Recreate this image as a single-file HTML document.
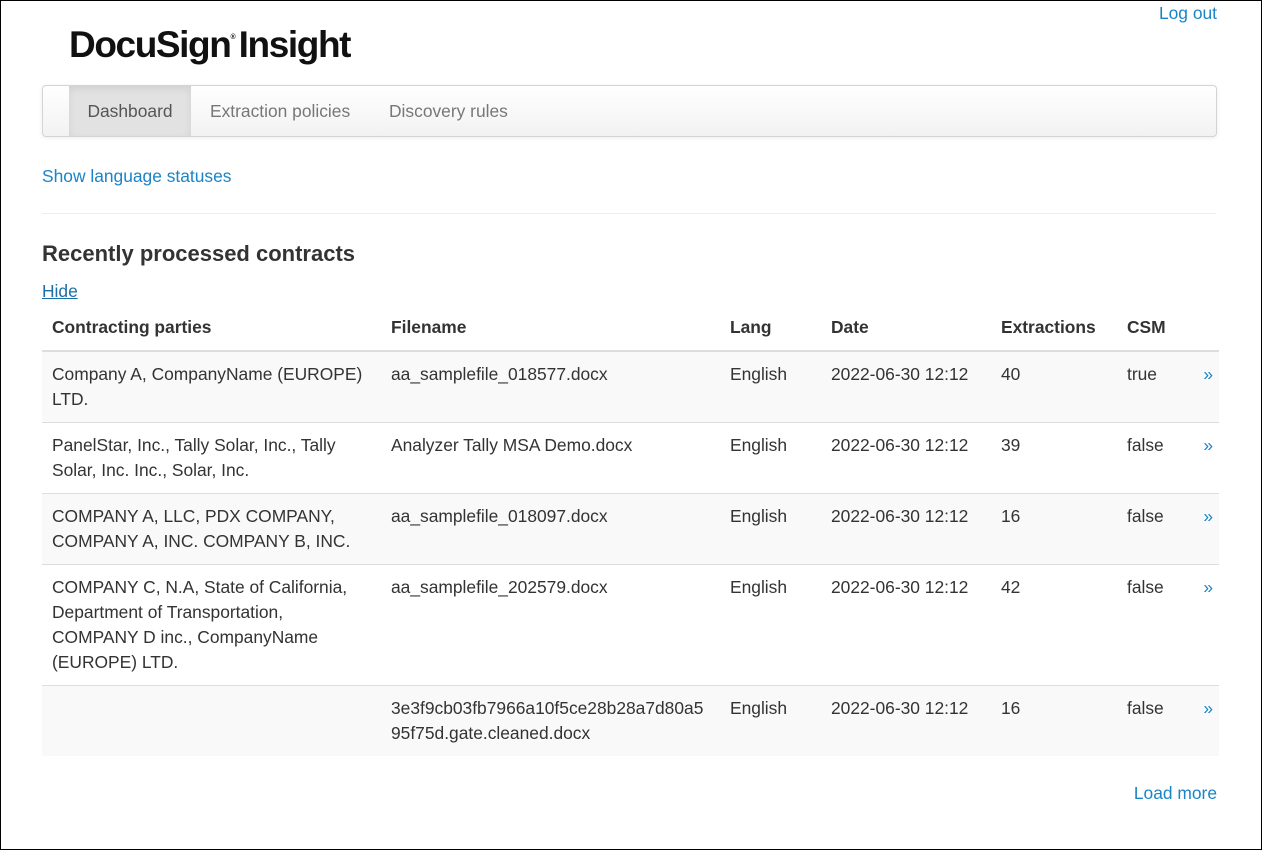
<!DOCTYPE html>
<html><head><style>
html,body{margin:0;padding:0}
body{width:1260px;height:848px;border:1px solid #000;font-family:"Liberation Sans",sans-serif;font-size:17.4px;color:#333;position:relative;overflow:hidden;background:#fff}
a{color:#1b84c6;text-decoration:none}
.logo{position:absolute;left:68px;top:23px;font-size:37px;font-weight:bold;color:#111;letter-spacing:-1.4px}
.logo sup{font-size:7px;letter-spacing:0;vertical-align:top;position:relative;top:10px;margin-right:3px}
.logout{position:absolute;right:44px;top:2px}
.nav{position:absolute;left:41px;top:84px;width:1173px;height:50px;border:1px solid #d4d4d4;border-radius:4px;background:linear-gradient(#fff,#f2f2f2);box-shadow:0 1px 4px rgba(0,0,0,.08)}
.nav span{position:absolute;top:0;height:50px;line-height:50px;color:#777}
.nav .act{background:#e2e2e2;color:#555;box-shadow:inset 0 3px 8px rgba(0,0,0,.08)}
.lang{position:absolute;left:41px;top:165px}
hr{position:absolute;left:41px;top:212px;width:1174px;margin:0;border:0;border-top:1px solid #eee}
h2{position:absolute;left:41px;top:240px;margin:0;font-size:22px;font-weight:bold;color:#333}
.hide{position:absolute;left:41px;top:280px;color:#1b6fa8;text-decoration:underline}
table{position:absolute;left:41px;top:306px;width:1177px;border-collapse:collapse}
td,th{text-align:left;vertical-align:top;padding:10px 10px;line-height:25px}
th{font-weight:bold;padding:8px 10px 10px;border-bottom:2px solid #ddd}
tr.s td{background:#f9f9f9}
tbody tr td{border-top:1px solid #ddd}
tbody tr:first-child td{border-top:0}
td.r{padding-right:6px;text-align:right}
.more{position:absolute;right:44px;top:782px}
</style></head><body>
<div class="logo">DocuSign<sup>®</sup>Insight</div>
<a class="logout">Log out</a>
<div class="nav">
<span class="act" style="left:26px;width:122px;text-align:center">Dashboard</span>
<span style="left:167px">Extraction policies</span>
<span style="left:346px">Discovery rules</span>
</div>
<a class="lang">Show language statuses</a>
<hr>
<h2>Recently processed contracts</h2>
<a class="hide">Hide</a>
<table>
<colgroup><col style="width:339px"><col style="width:339px"><col style="width:101px"><col style="width:170px"><col style="width:126px"><col style="width:70px"><col></colgroup>
<thead><tr><th>Contracting parties</th><th>Filename</th><th>Lang</th><th>Date</th><th>Extractions</th><th>CSM</th><th></th></tr></thead>
<tbody>
<tr class="s"><td>Company A, CompanyName (EUROPE) LTD.</td><td>aa_samplefile_018577.docx</td><td>English</td><td>2022-06-30 12:12</td><td>40</td><td>true</td><td class="r"><a>»</a></td></tr>
<tr><td>PanelStar, Inc., Tally Solar, Inc., Tally Solar, Inc. Inc., Solar, Inc.</td><td>Analyzer Tally MSA Demo.docx</td><td>English</td><td>2022-06-30 12:12</td><td>39</td><td>false</td><td class="r"><a>»</a></td></tr>
<tr class="s"><td>COMPANY A, LLC, PDX COMPANY, COMPANY A, INC. COMPANY B, INC.</td><td>aa_samplefile_018097.docx</td><td>English</td><td>2022-06-30 12:12</td><td>16</td><td>false</td><td class="r"><a>»</a></td></tr>
<tr><td>COMPANY C, N.A, State of California, Department of Transportation, COMPANY D inc., CompanyName (EUROPE) LTD.</td><td>aa_samplefile_202579.docx</td><td>English</td><td>2022-06-30 12:12</td><td>42</td><td>false</td><td class="r"><a>»</a></td></tr>
<tr class="s"><td></td><td>3e3f9cb03fb7966a10f5ce28b28a7d80a5<br>95f75d.gate.cleaned.docx</td><td>English</td><td>2022-06-30 12:12</td><td>16</td><td>false</td><td class="r"><a>»</a></td></tr>
</tbody></table>
<a class="more">Load more</a>
</body></html>
